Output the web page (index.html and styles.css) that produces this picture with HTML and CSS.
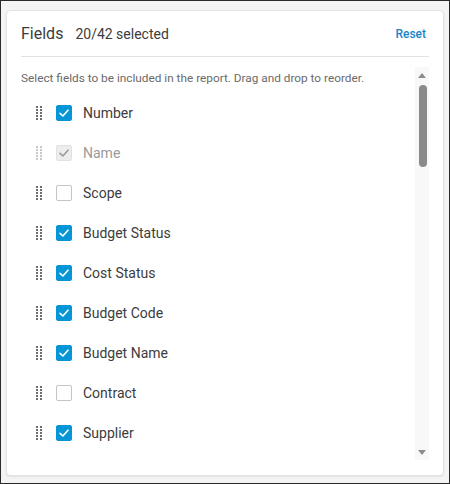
FILE: index.html
```html
<!DOCTYPE html>
<html>
<head>
<meta charset="utf-8">
<link rel="stylesheet" href="styles.css">
</head>
<body>
<div class="card">
  <div class="header">
    <span class="title">Fields</span>
    <span class="count">20/42 selected</span>
    <a class="reset">Reset</a>
  </div>
  <div class="scroll">
    <div class="list">
      <p class="desc">Select fields to be included in the report. Drag and drop to reorder.</p>
      <ul class="rows">
        <li class="row"><svg class="handle" viewBox="0 0 6 14" width="6" height="14"><g><circle cx="1" cy="1" r="1"/><circle cx="5" cy="1" r="1"/><circle cx="1" cy="4" r="1"/><circle cx="5" cy="4" r="1"/><circle cx="1" cy="7" r="1"/><circle cx="5" cy="7" r="1"/><circle cx="1" cy="10" r="1"/><circle cx="5" cy="10" r="1"/><circle cx="1" cy="13" r="1"/><circle cx="5" cy="13" r="1"/></g></svg><span class="box checked"><svg viewBox="0 0 16 16" width="16" height="16"><path d="M4 8.3 L6.9 11 L12 5.2"/></svg></span><span class="label">Number</span></li>
        <li class="row disabled"><svg class="handle" viewBox="0 0 6 14" width="6" height="14"><g><circle cx="1" cy="1" r="1"/><circle cx="5" cy="1" r="1"/><circle cx="1" cy="4" r="1"/><circle cx="5" cy="4" r="1"/><circle cx="1" cy="7" r="1"/><circle cx="5" cy="7" r="1"/><circle cx="1" cy="10" r="1"/><circle cx="5" cy="10" r="1"/><circle cx="1" cy="13" r="1"/><circle cx="5" cy="13" r="1"/></g></svg><span class="box checked"><svg viewBox="0 0 16 16" width="16" height="16"><path d="M4 8.3 L6.9 11 L12 5.2"/></svg></span><span class="label">Name</span></li>
        <li class="row"><svg class="handle" viewBox="0 0 6 14" width="6" height="14"><g><circle cx="1" cy="1" r="1"/><circle cx="5" cy="1" r="1"/><circle cx="1" cy="4" r="1"/><circle cx="5" cy="4" r="1"/><circle cx="1" cy="7" r="1"/><circle cx="5" cy="7" r="1"/><circle cx="1" cy="10" r="1"/><circle cx="5" cy="10" r="1"/><circle cx="1" cy="13" r="1"/><circle cx="5" cy="13" r="1"/></g></svg><span class="box"></span><span class="label">Scope</span></li>
        <li class="row"><svg class="handle" viewBox="0 0 6 14" width="6" height="14"><g><circle cx="1" cy="1" r="1"/><circle cx="5" cy="1" r="1"/><circle cx="1" cy="4" r="1"/><circle cx="5" cy="4" r="1"/><circle cx="1" cy="7" r="1"/><circle cx="5" cy="7" r="1"/><circle cx="1" cy="10" r="1"/><circle cx="5" cy="10" r="1"/><circle cx="1" cy="13" r="1"/><circle cx="5" cy="13" r="1"/></g></svg><span class="box checked"><svg viewBox="0 0 16 16" width="16" height="16"><path d="M4 8.3 L6.9 11 L12 5.2"/></svg></span><span class="label">Budget Status</span></li>
        <li class="row"><svg class="handle" viewBox="0 0 6 14" width="6" height="14"><g><circle cx="1" cy="1" r="1"/><circle cx="5" cy="1" r="1"/><circle cx="1" cy="4" r="1"/><circle cx="5" cy="4" r="1"/><circle cx="1" cy="7" r="1"/><circle cx="5" cy="7" r="1"/><circle cx="1" cy="10" r="1"/><circle cx="5" cy="10" r="1"/><circle cx="1" cy="13" r="1"/><circle cx="5" cy="13" r="1"/></g></svg><span class="box checked"><svg viewBox="0 0 16 16" width="16" height="16"><path d="M4 8.3 L6.9 11 L12 5.2"/></svg></span><span class="label">Cost Status</span></li>
        <li class="row"><svg class="handle" viewBox="0 0 6 14" width="6" height="14"><g><circle cx="1" cy="1" r="1"/><circle cx="5" cy="1" r="1"/><circle cx="1" cy="4" r="1"/><circle cx="5" cy="4" r="1"/><circle cx="1" cy="7" r="1"/><circle cx="5" cy="7" r="1"/><circle cx="1" cy="10" r="1"/><circle cx="5" cy="10" r="1"/><circle cx="1" cy="13" r="1"/><circle cx="5" cy="13" r="1"/></g></svg><span class="box checked"><svg viewBox="0 0 16 16" width="16" height="16"><path d="M4 8.3 L6.9 11 L12 5.2"/></svg></span><span class="label">Budget Code</span></li>
        <li class="row"><svg class="handle" viewBox="0 0 6 14" width="6" height="14"><g><circle cx="1" cy="1" r="1"/><circle cx="5" cy="1" r="1"/><circle cx="1" cy="4" r="1"/><circle cx="5" cy="4" r="1"/><circle cx="1" cy="7" r="1"/><circle cx="5" cy="7" r="1"/><circle cx="1" cy="10" r="1"/><circle cx="5" cy="10" r="1"/><circle cx="1" cy="13" r="1"/><circle cx="5" cy="13" r="1"/></g></svg><span class="box checked"><svg viewBox="0 0 16 16" width="16" height="16"><path d="M4 8.3 L6.9 11 L12 5.2"/></svg></span><span class="label">Budget Name</span></li>
        <li class="row"><svg class="handle" viewBox="0 0 6 14" width="6" height="14"><g><circle cx="1" cy="1" r="1"/><circle cx="5" cy="1" r="1"/><circle cx="1" cy="4" r="1"/><circle cx="5" cy="4" r="1"/><circle cx="1" cy="7" r="1"/><circle cx="5" cy="7" r="1"/><circle cx="1" cy="10" r="1"/><circle cx="5" cy="10" r="1"/><circle cx="1" cy="13" r="1"/><circle cx="5" cy="13" r="1"/></g></svg><span class="box"></span><span class="label">Contract</span></li>
        <li class="row"><svg class="handle" viewBox="0 0 6 14" width="6" height="14"><g><circle cx="1" cy="1" r="1"/><circle cx="5" cy="1" r="1"/><circle cx="1" cy="4" r="1"/><circle cx="5" cy="4" r="1"/><circle cx="1" cy="7" r="1"/><circle cx="5" cy="7" r="1"/><circle cx="1" cy="10" r="1"/><circle cx="5" cy="10" r="1"/><circle cx="1" cy="13" r="1"/><circle cx="5" cy="13" r="1"/></g></svg><span class="box checked"><svg viewBox="0 0 16 16" width="16" height="16"><path d="M4 8.3 L6.9 11 L12 5.2"/></svg></span><span class="label">Supplier</span></li>
      </ul>
    </div>
    <div class="scrollbar">
      <span class="arrow up"></span>
      <span class="thumb"></span>
      <span class="spacer"></span>
      <span class="arrow down"></span>
    </div>
  </div>
</div>
</body>
</html>
```

FILE: styles.css
```css
html, body {
  margin: 0;
}
body {
  width: 450px;
  height: 484px;
  box-sizing: border-box;
  border: 1px solid #2b2b2b;
  background: #f4f4f4;
  padding: 9px 5px 7px 5px;
  font-family: Roboto, "Noto Sans", "Liberation Sans", sans-serif;
  color: #3c3c3c;
}
.card {
  height: 100%;
  box-sizing: border-box;
  background: #fff;
  border: 1px solid #e3e3e3;
  border-radius: 4px;
  box-shadow: 0 1px 2px rgba(0,0,0,0.08);
  padding: 0 14px;
  display: flex;
  flex-direction: column;
}
.header {
  height: 45px;
  flex: none;
  display: flex;
  align-items: center;
  border-bottom: 1px solid #e2e2e2;
}
.title {
  font-size: 16px;
  color: #3c3c3c;
  margin-right: 12px;
}
.count {
  font-size: 14px;
  color: #3c3c3c;
}
.reset {
  margin-left: auto;
  margin-right: 3px;
  font-size: 12px;
  font-weight: 500;
  color: #1a85c6;
}
.scroll {
  flex: 1;
  min-height: 0;
  display: flex;
  margin: 10px 0 15px 0;
}
.list {
  flex: 1;
  overflow: hidden;
}
.desc {
  margin: 3px 0 0 0;
  font-size: 11.8px;
  line-height: 16px;
  color: #6a6a6a;
}
.rows {
  list-style: none;
  margin: 7px 0 0 0;
  padding: 0;
}
.row {
  height: 40px;
  display: flex;
  align-items: center;
  padding-left: 15px;
}
.handle {
  flex: none;
  fill: #3c3c3c;
  margin-right: 14px;
}
.box {
  flex: none;
  width: 16px;
  height: 16px;
  box-sizing: border-box;
  border: 1px solid #c4c4c4;
  border-radius: 2px;
  background: #fff;
  margin-right: 11px;
  position: relative;
}
.box svg {
  position: absolute;
  left: -1px;
  top: -1px;
}
.box svg path {
  fill: none;
  stroke: #fff;
  stroke-width: 1.6;
  stroke-linecap: round;
  stroke-linejoin: round;
}
.box.checked {
  background: #0696d7;
  border-color: #0696d7;
}
.label {
  font-size: 14px;
  color: #3c3c3c;
}
.row.disabled .handle {
  fill: #b5b5b5;
}
.row.disabled .box {
  background: #ededed;
  border-color: #e2e2e2;
}
.row.disabled .box svg path {
  stroke: #9a9a9a;
}
.row.disabled .label {
  color: #9a9a9a;
}
.scrollbar {
  flex: none;
  width: 14px;
  background: #f8f8f8;
  display: flex;
  flex-direction: column;
  align-items: center;
}
.arrow {
  flex: none;
  height: 16px;
  width: 14px;
  display: flex;
  align-items: center;
  justify-content: center;
}
.arrow::before {
  content: "";
  width: 0;
  height: 0;
  border-left: 4px solid transparent;
  border-right: 4px solid transparent;
}
.arrow.up::before {
  border-bottom: 5px solid #8c8c8c;
}
.arrow.down::before {
  border-top: 5px solid #8c8c8c;
}
.thumb {
  flex: none;
  width: 8px;
  height: 82px;
  margin-top: 2px;
  margin-left: 1px;
  border-radius: 4px;
  background: #8a8a8a;
}
.spacer {
  flex: 1;
}
```
